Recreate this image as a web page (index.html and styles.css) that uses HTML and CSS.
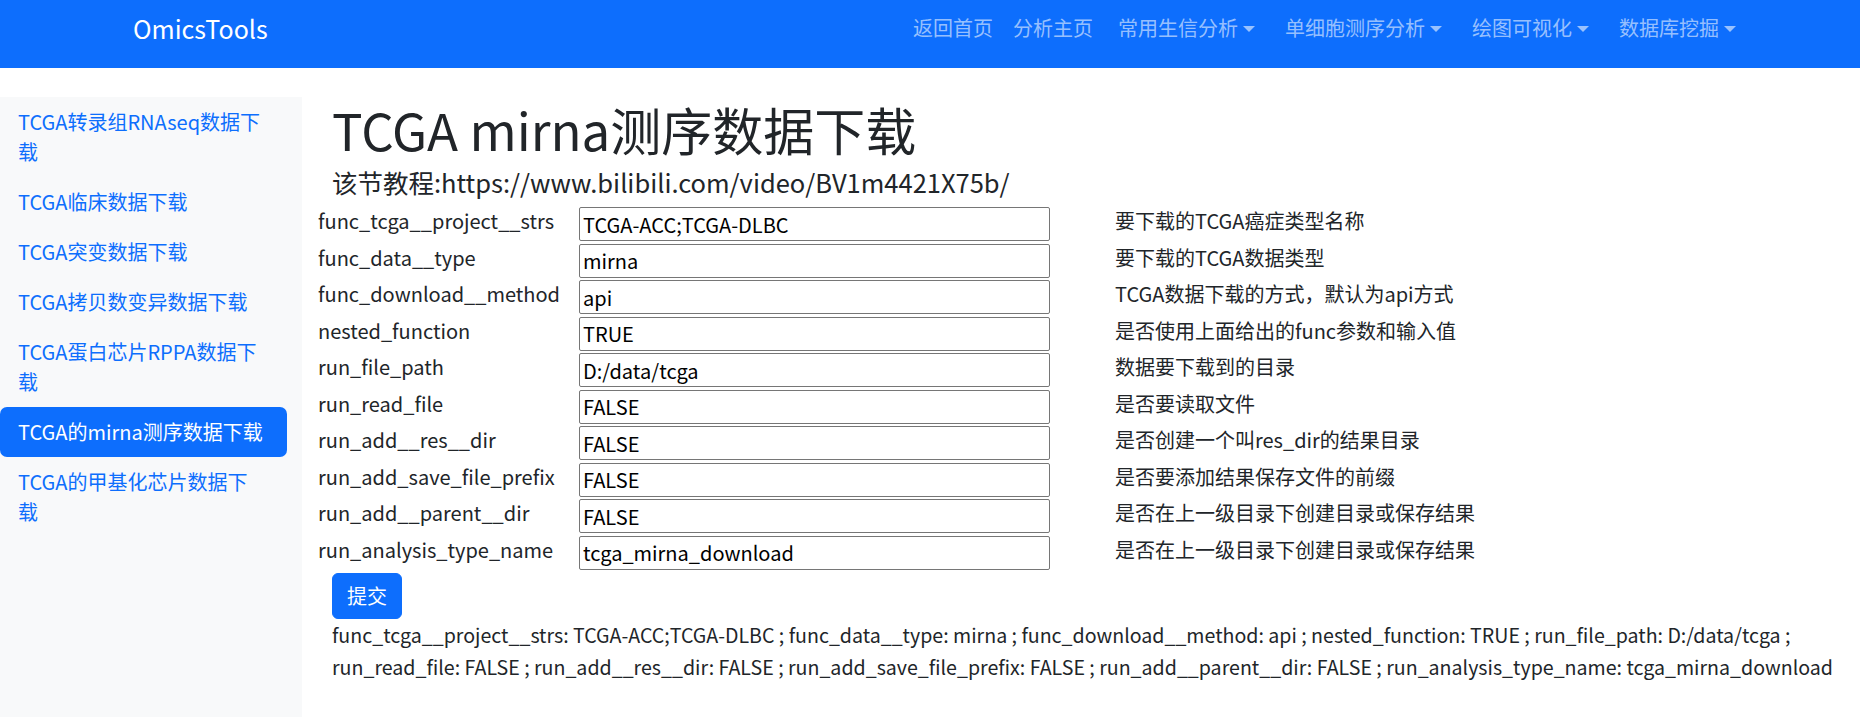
FILE: index.html
```html
<!DOCTYPE html>
<html lang="zh-CN">
<head>
<meta charset="utf-8">
<title>TCGA mirna测序数据下载</title>
<link rel="stylesheet" href="styles.css">
</head>
<body>
<header class="navbar">
  <a class="brand" href="#">OmicsTools</a>
  <nav class="topnav">
    <a class="nav-link" href="#">返回首页</a>
    <a class="nav-link" href="#">分析主页</a>
    <a class="nav-link dropdown" href="#">常用生信分析<span class="caret"></span></a>
    <a class="nav-link dropdown" href="#">单细胞测序分析<span class="caret"></span></a>
    <a class="nav-link dropdown" href="#">绘图可视化<span class="caret"></span></a>
    <a class="nav-link dropdown" href="#">数据库挖掘<span class="caret"></span></a>
  </nav>
</header>
<div class="layout">
  <aside class="sidebar">
    <ul class="pills">
      <li><a class="pill" href="#">TCGA转录组RNAseq数据下<br>载</a></li>
      <li><a class="pill" href="#">TCGA临床数据下载</a></li>
      <li><a class="pill" href="#">TCGA突变数据下载</a></li>
      <li><a class="pill" href="#">TCGA拷贝数变异数据下载</a></li>
      <li><a class="pill" href="#">TCGA蛋白芯片RPPA数据下<br>载</a></li>
      <li><a class="pill active" href="#">TCGA的mirna测序数据下载</a></li>
      <li><a class="pill" href="#">TCGA的甲基化芯片数据下<br>载</a></li>
    </ul>
  </aside>
  <main class="content">
    <h1 class="title">TCGA mirna测序数据下载</h1>
    <h4 class="subtitle">该节教程:https://www.bilibili.com/video/BV1m4421X75b/</h4>
    <form class="form-grid">
      <label class="lbl">func_tcga__project__strs</label>
      <input class="field" type="text" value="TCGA-ACC;TCGA-DLBC">
      <span class="desc">要下载的TCGA癌症类型名称</span>

      <label class="lbl">func_data__type</label>
      <input class="field" type="text" value="mirna">
      <span class="desc">要下载的TCGA数据类型</span>

      <label class="lbl">func_download__method</label>
      <input class="field" type="text" value="api">
      <span class="desc">TCGA数据下载的方式，默认为api方式</span>

      <label class="lbl">nested_function</label>
      <input class="field" type="text" value="TRUE">
      <span class="desc">是否使用上面给出的func参数和输入值</span>

      <label class="lbl">run_file_path</label>
      <input class="field" type="text" value="D:/data/tcga">
      <span class="desc">数据要下载到的目录</span>

      <label class="lbl">run_read_file</label>
      <input class="field" type="text" value="FALSE">
      <span class="desc">是否要读取文件</span>

      <label class="lbl">run_add__res__dir</label>
      <input class="field" type="text" value="FALSE">
      <span class="desc">是否创建一个叫res_dir的结果目录</span>

      <label class="lbl">run_add_save_file_prefix</label>
      <input class="field" type="text" value="FALSE">
      <span class="desc">是否要添加结果保存文件的前缀</span>

      <label class="lbl">run_add__parent__dir</label>
      <input class="field" type="text" value="FALSE">
      <span class="desc">是否在上一级目录下创建目录或保存结果</span>

      <label class="lbl">run_analysis_type_name</label>
      <input class="field" type="text" value="tcga_mirna_download">
      <span class="desc">是否在上一级目录下创建目录或保存结果</span>
    </form>
    <button class="btn" type="button">提交</button>
    <p class="output">func_tcga__project__strs: TCGA-ACC;TCGA-DLBC ; func_data__type: mirna ; func_download__method: api ; nested_function: TRUE ; run_file_path: D:/data/tcga ;<br>run_read_file: FALSE ; run_add__res__dir: FALSE ; run_add_save_file_prefix: FALSE ; run_add__parent__dir: FALSE ; run_analysis_type_name: tcga_mirna_download</p>
  </main>
</div>
</body>
</html>
```

FILE: styles.css
```css
* { box-sizing: border-box; }

html, body {
  margin: 0;
  padding: 0;
}

body {
  font-family: "Noto Sans CJK SC", "Noto Sans", sans-serif;
  font-size: 20px;
  line-height: 30px;
  color: #212529;
  background: #ffffff;
  min-height: 717px;
}

a { text-decoration: none; }

.navbar {
  height: 68px;
  background: #0d6efd;
  display: flex;
  align-items: flex-start;
  padding-left: 133px;
  padding-right: 109px;
}

.brand {
  color: #ffffff;
  font-size: 25px;
  line-height: 38px;
  margin-top: 9px;
  white-space: nowrap;
}

.topnav {
  margin-left: auto;
  display: flex;
  margin-top: 13px;
}

.nav-link {
  color: rgba(255, 255, 255, 0.58);
  font-size: 20px;
  line-height: 30px;
  padding: 0 10px;
  white-space: nowrap;
  display: flex;
  align-items: center;
}

.nav-link.dropdown {
  padding: 0 15px;
}

.caret {
  display: inline-block;
  width: 0;
  height: 0;
  margin-left: 5px;
  border-top: 6px solid rgba(255, 255, 255, 0.58);
  border-left: 6px solid transparent;
  border-right: 6px solid transparent;
  margin-top: 2px;
}

.layout {
  display: flex;
  margin-top: 29px;
}

.sidebar {
  width: 302px;
  flex: 0 0 302px;
  background: #f8f9fa;
  min-height: 620px;
  padding-right: 15px;
}

.pills {
  list-style: none;
  margin: 0;
  padding: 0;
}

.pill {
  display: block;
  color: #0d6efd;
  padding: 10px 18px;
  font-size: 20px;
  line-height: 30px;
  white-space: nowrap;
  border-radius: 7px;
}

.pill.active {
  background: #0d6efd;
  color: #ffffff;
}

.content {
  flex: 1;
  padding-left: 30px;
  padding-right: 15px;
}

.title {
  font-size: 51px;
  font-weight: 400;
  line-height: 60px;
  margin: 2px 0 6px 0;
  color: #212529;
}

.subtitle {
  font-size: 25.5px;
  font-weight: 400;
  line-height: 34px;
  margin: 0 0 8px 0;
  color: #212529;
}

.form-grid {
  display: grid;
  grid-template-columns: 261px 471px auto;
  row-gap: 2.5px;
  margin: 0 0 0 -14px;
}

.lbl {
  font-size: 20px;
  line-height: 28px;
  color: #212529;
  white-space: nowrap;
}

.field {
  height: 34px;
  width: 471px;
  font-family: "Noto Sans CJK SC", "Noto Sans", sans-serif;
  font-size: 20px;
  color: #000000;
  border: 1px solid #767676;
  border-radius: 2px;
  padding: 0 3px;
  background: #ffffff;
}

.desc {
  margin-left: 65px;
  font-size: 20px;
  line-height: 28px;
  white-space: nowrap;
}

.btn {
  display: block;
  margin-top: 3px;
  background: #0d6efd;
  color: #ffffff;
  border: 1px solid #0d6efd;
  border-radius: 6px;
  font-family: "Noto Sans CJK SC", sans-serif;
  font-size: 20px;
  line-height: 30px;
  padding: 7px 14px;
  height: 46px;
  white-space: nowrap;
}

.output {
  margin: 0;
  font-size: 19.6px;
  line-height: 32px;
  white-space: nowrap;
}
```
